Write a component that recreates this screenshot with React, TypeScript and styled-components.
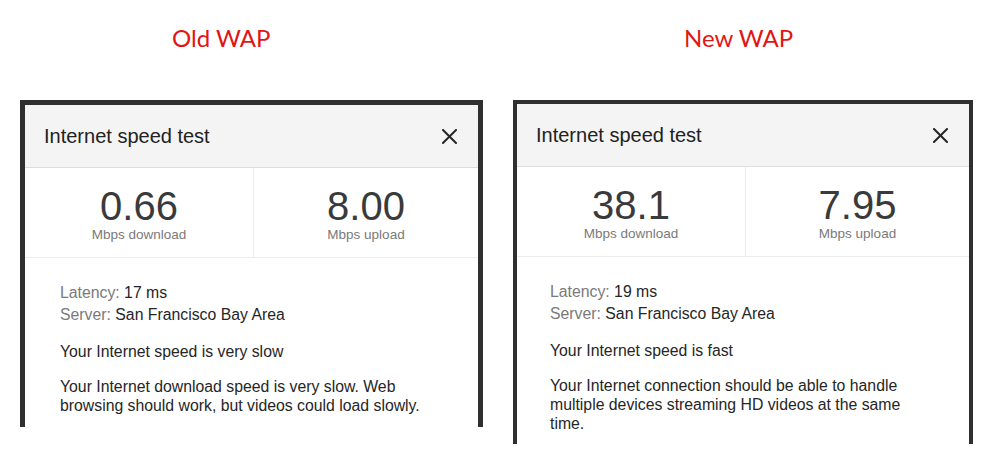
import React from "react";
import styled, { createGlobalStyle } from "styled-components";

const GlobalStyle = createGlobalStyle`
  html, body { margin: 0; padding: 0; background: #ffffff; }
  body { font-family: "Liberation Sans", Arial, sans-serif; }
`;

const Page = styled.div`
  display: flex;
  gap: 30px;
  padding-left: 20px;
  width: 992px;
  height: 472px;
  box-sizing: border-box;
  overflow: hidden;
`;

const Column = styled.div<{ $w: number }>`
  display: flex;
  flex-direction: column;
  width: ${(p) => p.$w}px;
`;

const Caption = styled.div<{ $left: number }>`
  height: 100px;
  box-sizing: border-box;
  padding-top: 23px;
  padding-left: ${(p) => p.$left}px;
  font-family: Lato, "Open Sans", sans-serif;
  font-size: 24px;
  line-height: 30px;
  color: #e21414;
`;

const Panel = styled.div<{ $h: number; $b: number }>`
  height: ${(p) => p.$h}px;
  box-sizing: border-box;
  border: ${(p) => p.$b}px solid #2f2f2f;
  border-bottom: none;
  background: #ffffff;
  overflow: hidden;
  display: flex;
  flex-direction: column;
`;

const Header = styled.div`
  height: 63px;
  flex: none;
  box-sizing: border-box;
  background: #f4f4f4;
  border-bottom: 1px solid #dcdcdc;
  display: flex;
  align-items: center;
  justify-content: space-between;
  padding: 0 21px 0 19px;
`;

const Title = styled.div`
  font-size: 20px;
  color: #222222;
`;

const CloseButton = styled.div`
  width: 15px;
  height: 15px;
  display: flex;
`;

const Stats = styled.div`
  display: grid;
  grid-template-columns: 228px 1fr;
  border-bottom: 1px solid #ededed;
  flex: none;
`;

const Stat = styled.div<{ $divider?: boolean }>`
  display: flex;
  flex-direction: column;
  align-items: center;
  padding: 18px 0 14px;
  border-left: ${(p) => (p.$divider ? "1px solid #ececec" : "none")};
`;

const Value = styled.div`
  font-size: 40px;
  line-height: 40px;
  color: #3a3a3a;
`;

const Unit = styled.div`
  font-size: 13.5px;
  line-height: 16px;
  margin-top: 1px;
  color: #7a7a7a;
`;

const Body = styled.div<{ $pl: number }>`
  padding: 24px 20px 0 ${(p) => p.$pl}px;
  font-size: 15.8px;
  color: #262626;
`;

const InfoLine = styled.div`
  line-height: 22px;
`;

const Key = styled.span`
  color: #7a7a7a;
`;

const Verdict = styled.div`
  line-height: 22px;
  margin-top: 15px;
`;

const Detail = styled.div<{ $w: number }>`
  line-height: 19px;
  margin-top: 14px;
  max-width: ${(p) => p.$w}px;
`;

const XIcon = () => (
  <svg width="15" height="15" viewBox="0 0 15 15">
    <path d="M1 1 L14 14 M14 1 L1 14" stroke="#262626" strokeWidth="2" strokeLinecap="square" />
  </svg>
);

type Data = {
  caption: string;
  captionLeft: number;
  width: number;
  height: number;
  border: number;
  down: string;
  up: string;
  latency: string;
  verdict: string;
  detail: string;
  bodyLeft: number;
  detailWidth: number;
};

const panels: Data[] = [
  {
    caption: "Old WAP",
    captionLeft: 152,
    width: 463,
    height: 327,
    border: 5,
    down: "0.66",
    up: "8.00",
    latency: "17 ms",
    verdict: "Your Internet speed is very slow",
    detail:
      "Your Internet download speed is very slow. Web browsing should work, but videos could load slowly.",
    bodyLeft: 35,
    detailWidth: 383,
  },
  {
    caption: "New WAP",
    captionLeft: 171,
    width: 460,
    height: 344,
    border: 4,
    down: "38.1",
    up: "7.95",
    latency: "19 ms",
    verdict: "Your Internet speed is fast",
    detail:
      "Your Internet connection should be able to handle multiple devices streaming HD videos at the same time.",
    bodyLeft: 33,
    detailWidth: 368,
  },
];

export default function App() {
  return (
    <>
      <GlobalStyle />
      <Page>
        {panels.map((d) => (
          <Column key={d.caption} $w={d.width}>
            <Caption $left={d.captionLeft}>{d.caption}</Caption>
            <Panel $h={d.height} $b={d.border}>
              <Header>
                <Title>Internet speed test</Title>
                <CloseButton>
                  <XIcon />
                </CloseButton>
              </Header>
              <Stats>
                <Stat>
                  <Value>{d.down}</Value>
                  <Unit>Mbps download</Unit>
                </Stat>
                <Stat $divider>
                  <Value>{d.up}</Value>
                  <Unit>Mbps upload</Unit>
                </Stat>
              </Stats>
              <Body $pl={d.bodyLeft}>
                <InfoLine>
                  <Key>Latency:</Key> {d.latency}
                </InfoLine>
                <InfoLine>
                  <Key>Server:</Key> San Francisco Bay Area
                </InfoLine>
                <Verdict>{d.verdict}</Verdict>
                <Detail $w={d.detailWidth}>{d.detail}</Detail>
              </Body>
            </Panel>
          </Column>
        ))}
      </Page>
    </>
  );
}
